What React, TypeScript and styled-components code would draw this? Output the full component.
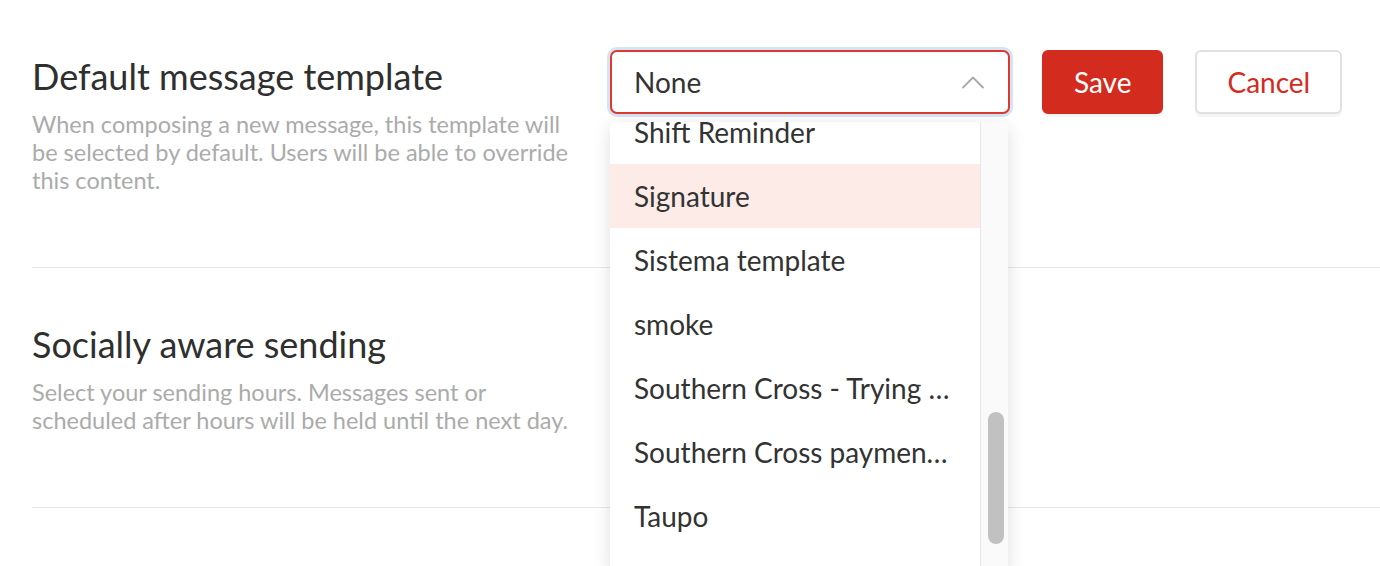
import React, { useEffect, useRef } from "react";
import styled, { createGlobalStyle } from "styled-components";

const Global = createGlobalStyle`
  html, body {
    margin: 0;
    padding: 0;
    background: #ffffff;
    overflow: hidden;
    height: 566px;
  }
  body {
    font-family: Lato, "Open Sans", "Liberation Sans", sans-serif;
    color: #333333;
  }
  * { box-sizing: border-box; }
`;

const Page = styled.div`
  padding-left: 32px;
`;

const Section = styled.section`
  display: flex;
  align-items: flex-start;
  padding: 50px 0 73px;
  border-bottom: 1px solid #e6e6e6;
`;

const Info = styled.div`
  width: 546px;
  margin-right: 32px;
  flex-shrink: 0;
`;

const Title = styled.h2`
  margin: 0;
  font-size: 36px;
  line-height: 52px;
  font-weight: 400;
  color: #2f2f2f;
`;

const Description = styled.p`
  margin: 8px 0 0;
  font-size: 23.5px;
  line-height: 28px;
  color: #ababab;
`;

const Controls = styled.div`
  display: flex;
  align-items: flex-start;
  gap: 32px;
`;

const SelectWrap = styled.div`
  position: relative;
  width: 400px;
`;

const SelectBox = styled.div`
  display: flex;
  align-items: center;
  justify-content: space-between;
  width: 100%;
  height: 64px;
  padding: 0 23px 0 22px;
  background: #fff;
  border: 2px solid #dc3a2f;
  border-radius: 7px;
  box-shadow: 0 0 0 3px #d4e3f5;
  font-size: 28px;
  color: #333;
  cursor: pointer;
`;

const SelectValue = styled.span`
  line-height: 1;
`;

const Menu = styled.div`
  position: absolute;
  top: calc(100% + 8px);
  left: 0;
  width: 398px;
  height: 450px;
  display: flex;
  background: #fff;
  border-radius: 6px;
  box-shadow: 0 4px 18px rgba(0, 0, 0, 0.13);
  overflow: hidden;
  z-index: 10;
`;

const OptionList = styled.ul`
  flex: 1;
  min-width: 0;
  margin: 0;
  padding: 0;
  list-style: none;
  overflow: hidden;
`;

const Option = styled.li<{ $active?: boolean }>`
  height: 64px;
  display: flex;
  align-items: center;
  padding: 0 24px;
  font-size: 28px;
  color: #333;
  background: ${(p) => (p.$active ? "#fdebe8" : "transparent")};
  cursor: pointer;
`;

const OptionText = styled.span`
  display: block;
  overflow: hidden;
  text-overflow: ellipsis;
  white-space: nowrap;
`;

const ScrollTrack = styled.div`
  width: 28px;
  flex-shrink: 0;
  background: #fafafa;
  border-left: 1px solid #e8e8e8;
  padding-left: 7px;
`;

const ScrollThumb = styled.div`
  width: 16px;
  border-radius: 8px;
  background: #c1c1c1;
`;

const Button = styled.button<{ $primary?: boolean }>`
  height: 64px;
  padding: 0 30px;
  border-radius: 6px;
  font-family: inherit;
  font-size: 28px;
  cursor: pointer;
  background: ${(p) => (p.$primary ? "#d42b1f" : "#ffffff")};
  color: ${(p) => (p.$primary ? "#ffffff" : "#d42b1f")};
  border: 2px solid ${(p) => (p.$primary ? "#d42b1f" : "#e0e0e0")};
  box-shadow: 0 3px 0 rgba(0, 0, 0, 0.04);
`;

const Chevron = () => (
  <svg width="24" height="14" viewBox="0 0 24 14" fill="none">
    <polyline
      points="2,12.5 12,2.5 22,12.5"
      stroke="#a9a9a9"
      strokeWidth="1.8"
      strokeLinecap="round"
      strokeLinejoin="round"
    />
  </svg>
);

const TOTAL_OPTIONS = 24;
const FIRST_RENDERED = 15;
const ITEM_HEIGHT = 64;
const MENU_HEIGHT = 450;
const SCROLL_OFFSET = 16 * ITEM_HEIGHT - 42;

const visibleOptions = [
  "Shift Reminder",
  "Signature",
  "Sistema template",
  "smoke",
  "Southern Cross - Trying to reach you",
  "Southern Cross payment reminder",
  "Taupo",
  "Test template",
  "Welcome",
];

const contentHeight = TOTAL_OPTIONS * ITEM_HEIGHT;
const thumbHeight = (MENU_HEIGHT * MENU_HEIGHT) / contentHeight;
const thumbTop =
  (SCROLL_OFFSET / (contentHeight - MENU_HEIGHT)) * (MENU_HEIGHT - thumbHeight) + 2;

export default function App() {
  const listRef = useRef<HTMLUListElement>(null);

  useEffect(() => {
    if (listRef.current) {
      listRef.current.scrollTop = SCROLL_OFFSET - FIRST_RENDERED * ITEM_HEIGHT;
    }
  }, []);

  return (
    <>
      <Global />
      <Page>
        <Section>
          <Info>
            <Title>Default message template</Title>
            <Description>
              When composing a new message, this template will be selected by
              default. Users will be able to override this content.
            </Description>
          </Info>
          <Controls>
            <SelectWrap>
              <SelectBox>
                <SelectValue>None</SelectValue>
                <Chevron />
              </SelectBox>
              <Menu>
                <OptionList ref={listRef}>
                  {visibleOptions.map((o) => (
                    <Option key={o} $active={o === "Signature"}>
                      <OptionText>{o}</OptionText>
                    </Option>
                  ))}
                </OptionList>
                <ScrollTrack>
                  <ScrollThumb
                    style={{ marginTop: thumbTop, height: thumbHeight }}
                  />
                </ScrollTrack>
              </Menu>
            </SelectWrap>
            <Button type="button" $primary>
              Save
            </Button>
            <Button type="button">Cancel</Button>
          </Controls>
        </Section>
        <Section>
          <Info>
            <Title>Socially aware sending</Title>
            <Description>
              Select your sending hours. Messages sent or scheduled after hours
              will be held until the next day.
            </Description>
          </Info>
        </Section>
      </Page>
    </>
  );
}
